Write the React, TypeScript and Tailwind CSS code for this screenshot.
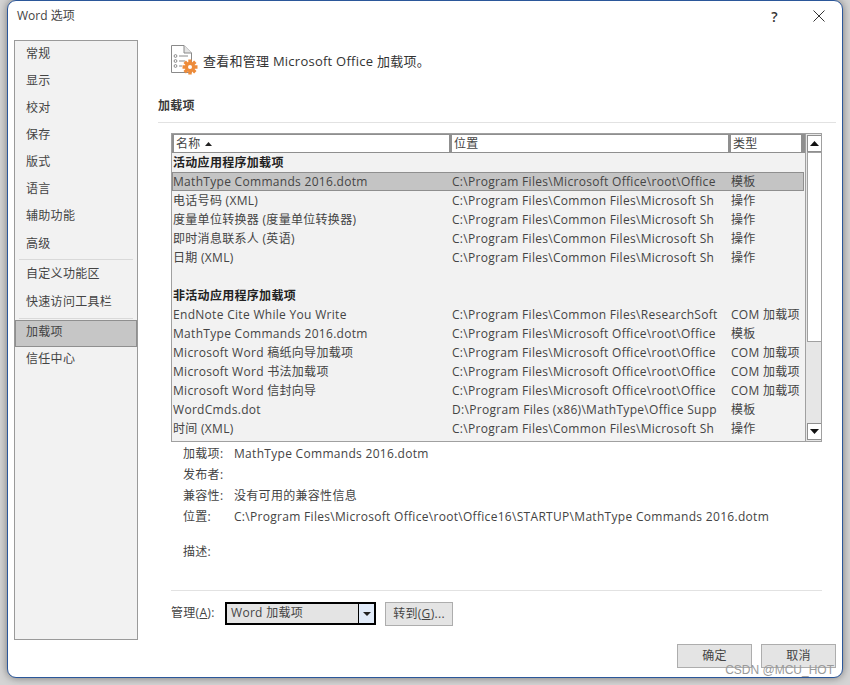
import React from "react";

const sideTop = ["常规", "显示", "校对", "保存", "版式", "语言", "辅助功能", "高级"];

const activeRows = [
  ["MathType Commands 2016.dotm", "C:\\Program Files\\Microsoft Office\\root\\Office", "模板"],
  ["电话号码 (XML)", "C:\\Program Files\\Common Files\\Microsoft Sh", "操作"],
  ["度量单位转换器 (度量单位转换器)", "C:\\Program Files\\Common Files\\Microsoft Sh", "操作"],
  ["即时消息联系人 (英语)", "C:\\Program Files\\Common Files\\Microsoft Sh", "操作"],
  ["日期 (XML)", "C:\\Program Files\\Common Files\\Microsoft Sh", "操作"],
];

const inactiveRows = [
  ["EndNote Cite While You Write", "C:\\Program Files\\Common Files\\ResearchSoft", "COM 加载项"],
  ["MathType Commands 2016.dotm", "C:\\Program Files\\Microsoft Office\\root\\Office", "模板"],
  ["Microsoft Word 稿纸向导加载项", "C:\\Program Files\\Microsoft Office\\root\\Office", "COM 加载项"],
  ["Microsoft Word 书法加载项", "C:\\Program Files\\Microsoft Office\\root\\Office", "COM 加载项"],
  ["Microsoft Word 信封向导", "C:\\Program Files\\Microsoft Office\\root\\Office", "COM 加载项"],
  ["WordCmds.dot", "D:\\Program Files (x86)\\MathType\\Office Supp", "模板"],
  ["时间 (XML)", "C:\\Program Files\\Common Files\\Microsoft Sh", "操作"],
];

const details = [
  ["加载项:", "MathType Commands 2016.dotm"],
  ["发布者:", ""],
  ["兼容性:", "没有可用的兼容性信息"],
  ["位置:", "C:\\Program Files\\Microsoft Office\\root\\Office16\\STARTUP\\MathType Commands 2016.dotm"],
];

const Row: React.FC<{ cells: string[]; selected?: boolean }> = ({ cells, selected }) => (
  <div
    className={
      "flex h-[19px] w-[632px] items-center whitespace-nowrap " +
      (selected ? "bg-[#c4c4c4] border border-[#8f8f8f]" : "border border-transparent")
    }
  >
    <div className="w-[279px] overflow-hidden">{cells[0]}</div>
    <div className="w-[279px] overflow-hidden">{cells[1]}</div>
    <div className="w-[72px] overflow-hidden">{cells[2]}</div>
  </div>
);

const HeaderCell: React.FC<{ width: string; children: React.ReactNode }> = ({ width, children }) => (
  <div className={"h-[17px] bg-white flex items-center pl-[2px] mr-[3px] " + width}>{children}</div>
);

const ScrollButton: React.FC<{ up?: boolean }> = ({ up }) => (
  <div className="h-[17px] w-[15px] bg-white border border-[#8f8f8f] flex items-center justify-center">
    <svg width="9" height="5" viewBox="0 0 9 5">
      <path d={up ? "M4.5 0 L9 5 L0 5 Z" : "M0 0 L9 0 L4.5 5 Z"} fill="#111" />
    </svg>
  </div>
);

const AddinIcon = () => (
  <svg width="28" height="32" viewBox="0 0 28 32">
    <path d="M0.5 0.5 H13 L20.5 8 V27.5 H0.5 Z" fill="#fff" stroke="#8a8a8a" />
    <path d="M13 0.5 V8 H20.5" fill="#e4e4e4" stroke="#8a8a8a" />
    <circle cx="4.5" cy="11" r="1.4" fill="none" stroke="#8a8a8a" />
    <circle cx="4.5" cy="16" r="1.4" fill="none" stroke="#8a8a8a" />
    <circle cx="4.5" cy="21" r="1.4" fill="none" stroke="#8a8a8a" />
    <path d="M8 11 H17 M8 16 H14 M8 21 H11" stroke="#8a8a8a" />
    <g stroke="#ed8b3a" strokeWidth="3.4">
      <path d="M19 14.5 V29.5 M11.5 22 H26.5 M13.7 16.7 L24.3 27.3 M24.3 16.7 L13.7 27.3" />
    </g>
    <circle cx="19" cy="22" r="5" fill="#ed8b3a" />
    <circle cx="19" cy="22" r="2" fill="#fff" />
  </svg>
);

const App: React.FC = () => {
  return (
    <div
      className="w-[850px] h-[685px] bg-[#d4d4d4] overflow-hidden pl-[7px] text-[12px] tracking-[0.3px] text-[#444]"
      style={{ fontFamily: '"Open Sans", "Noto Sans CJK SC", sans-serif' }}
    >
      <div className="relative w-[836px] h-[678px] bg-white border border-[#2b579a] rounded-[9px] shadow-[0_0_8px_rgba(0,0,0,0.45)] flex flex-col">
        {/* Title bar */}
        <div className="h-[30px] flex items-center pl-[9px] pr-[17px] shrink-0">
          <span className="text-[12px] tracking-normal text-[#444]">Word 选项</span>
          <span className="ml-auto mr-[35px] text-[14px] font-semibold text-[#333]">?</span>
          <svg width="12" height="12" viewBox="0 0 12 12">
            <path d="M0.5 0.5 L11.5 11.5 M11.5 0.5 L0.5 11.5" stroke="#333" strokeWidth="1" />
          </svg>
        </div>

        <div className="flex flex-1 pl-[6px]">
          {/* Left nav */}
          <div className="w-[124px] h-[600px] mt-[9px] bg-[#f2f2f2] border border-[#9a9a9a] shrink-0">
            <div className="flex flex-col">
              {sideTop.map((label) => (
                <div key={label} className="h-[27px] flex items-center pl-[11px] pb-[2px] last:pb-0">
                  {label}
                </div>
              ))}
            </div>
            <div className="h-px bg-[#d9d9d9] mx-[4px] mt-[2px]" />
            <div className="h-[29px] mt-[1px] flex items-center pl-[11px] pb-[4px]">自定义功能区</div>
            <div className="h-[27px] flex items-center pl-[11px] pb-[4px]">快速访问工具栏</div>
            <div className="h-px bg-[#d9d9d9] mx-[4px] mt-[1px]" />
            <div className="h-[27px] mt-px flex items-center pl-[10px] pb-[3px] bg-[#c6c6c6] border border-[#8f8f8f]">加载项</div>
            <div className="h-[25px] flex items-center pl-[11px] pb-[2px]">信任中心</div>
          </div>

          {/* Main panel */}
          <div className="flex-1 pl-[20px] pr-[12px] flex flex-col">
            <div className="flex items-start h-[36px] mt-[14px] pl-[13px]">
              <AddinIcon />
              <span className="ml-[4px] mt-[7px] text-[13px] tracking-[0.25px] text-[#333]">查看和管理 Microsoft Office 加载项。</span>
            </div>
            <div className="mt-[16px] h-[18px] flex items-center font-bold text-[#3a3a3a] text-[12px]">加载项</div>
            <div className="h-px bg-[#e2e2e2] mt-[7px] mr-[-6px]" />

            {/* Add-in table */}
            <div className="ml-[13px] mt-[10px] w-[651px] h-[309px] border border-[#a0a0a0] flex bg-[#f2f2f2] overflow-hidden">
              <div className="w-[633px] shrink-0">
                <div className="h-[19px] bg-[#8f8f8f] flex items-center pl-[2px]">
                  <HeaderCell width="w-[275px]">
                    名称
                    <svg className="ml-[4px]" width="7" height="4" viewBox="0 0 7 4">
                      <path d="M3.5 0 L7 4 L0 4 Z" fill="#222" />
                    </svg>
                  </HeaderCell>
                  <HeaderCell width="w-[276px]">位置</HeaderCell>
                  <HeaderCell width="w-[70px]">类型</HeaderCell>
                </div>
                <div className="h-[19px] flex items-center pl-[1px] font-bold text-[#222]">活动应用程序加载项</div>
                {activeRows.map((r, i) => (
                  <Row key={r[0]} cells={r} selected={i === 0} />
                ))}
                <div className="h-[19px]" />
                <div className="h-[19px] flex items-center pl-[1px] font-bold text-[#222]">非活动应用程序加载项</div>
                {inactiveRows.map((r) => (
                  <Row key={r[0] + r[2]} cells={r} />
                ))}
              </div>
              <div className="flex-1 bg-[#e6e6e6] border-l border-[#a0a0a0] flex flex-col">
                <div className="pt-px pl-px"><ScrollButton up /></div>
                <div className="mx-px h-[190px] bg-white border border-[#a0a0a0] w-[15px]" />
                <div className="mt-auto pb-px pl-px"><ScrollButton /></div>
              </div>
            </div>

            {/* Details */}
            <div className="ml-[25px] mt-[1px]">
              {details.map(([label, value]) => (
                <div key={label} className="flex h-[21px] items-center whitespace-nowrap">
                  <div className="w-[51px]">{label}</div>
                  <div>{value}</div>
                </div>
              ))}
              <div className="h-[21px] mt-[14px] flex items-center">描述:</div>
            </div>

            <div className="h-px bg-[#e2e2e2] ml-[13px] w-[651px] mt-[28px]" />

            {/* Manage row */}
            <div className="flex items-start ml-[13px] mt-[11px]">
              <div className="w-[54px] h-[23px] flex items-center pb-[2px]">
                管理(<span className="underline">A</span>):
              </div>
              <div className="w-[151px] h-[23px] border-2 border-black bg-[#e4e4e4] flex items-center">
                <span className="pl-[4px] pb-[2px] flex-1">Word 加载项</span>
                <div className="w-[16px] h-full bg-[#e1ebf9] border-l border-black flex items-center justify-center">
                  <svg width="8" height="4" viewBox="0 0 8 4">
                    <path d="M0 0 H8 L4 4 Z" fill="#222" />
                  </svg>
                </div>
              </div>
              <div className="ml-[9px] w-[68px] h-[24px] bg-[#e4e4e4] border border-[#adadad] flex items-center justify-center">
                转到(<span className="underline">G</span>)...
              </div>
            </div>
          </div>
        </div>

        {/* Footer buttons */}
        <div className="absolute right-[6px] bottom-[9px] flex gap-[9px]">
          <div className="w-[75px] h-[24px] bg-[#e4e4e4] border border-[#adadad] flex items-center justify-center">确定</div>
          <div className="w-[75px] h-[24px] bg-[#e4e4e4] border border-[#adadad] flex items-center justify-center">取消</div>
        </div>
        <div className="absolute right-[8px] bottom-[0px] text-[12px] tracking-normal text-[#9a9a9a] leading-[14px]" style={{ fontFamily: '"Liberation Sans", sans-serif' }}>
          CSDN @MCU_HOT
        </div>
      </div>
    </div>
  );
};

export default App;
